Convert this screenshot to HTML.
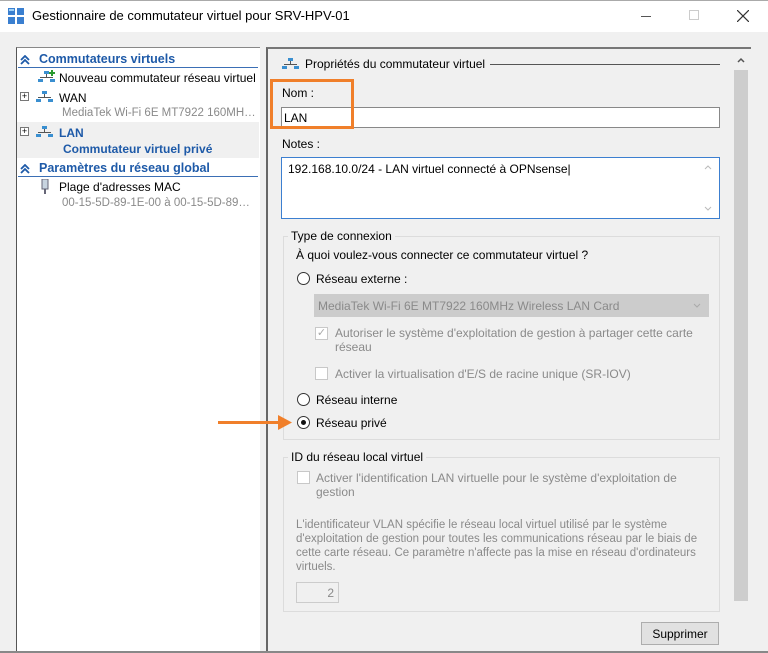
<!DOCTYPE html>
<html><head><meta charset="utf-8"><style>
*{margin:0;padding:0;box-sizing:border-box}
body{width:768px;height:653px;background:#f0f0f0;font-family:"Liberation Sans",sans-serif;font-size:12px;color:#000;position:relative;overflow:hidden}
.a{position:absolute;white-space:nowrap}
.g{color:#8a8a8a}
.hd{color:#1e5aa8;font-weight:bold}
.box{position:absolute;border:1px solid #dcdcdc}
.rad{position:absolute;width:13px;height:13px;border:1px solid #333;border-radius:50%;background:#fff}
.chk{position:absolute;width:13px;height:13px;border:1px solid #c8c8c8;background:#fff}
</style></head><body>
<div class="a" style="left:0;top:0;width:768px;height:32px;background:#fff;border-top:1px solid #aaa"></div>
<svg class="a" style="left:8px;top:8px" width="16" height="16"><rect x="0" y="0" width="7" height="7" fill="#3a7fd0"/><rect x="9" y="0" width="7" height="7" fill="#3a7fd0"/><rect x="0" y="9" width="7" height="7" fill="#3a7fd0"/><rect x="9" y="9" width="7" height="7" fill="#3a7fd0"/><rect x="1" y="1" width="5" height="2" fill="#9ed0f5"/></svg>
<div class="a" style="left:32px;top:8px;font-size:13px">Gestionnaire de commutateur virtuel pour SRV-HPV-01</div>
<div class="a" style="left:641px;top:16px;width:10px;height:1px;background:#555"></div>
<div class="a" style="left:689px;top:10px;width:10px;height:10px;border:1px solid #ccc"></div>
<svg class="a" style="left:737px;top:10px" width="12" height="12"><path d="M0 0L12 12M12 0L0 12" stroke="#333" stroke-width="1.2"/></svg>

<!-- left panel -->
<div class="a" style="left:16px;top:47px;width:244px;height:606px;background:#fff;border-left:1px solid #555;border-top:1px solid #888"></div>
<svg class="a" style="left:20px;top:55px" width="10" height="10"><path d="M1 5L5 1L9 5M1 9L5 5L9 9" stroke="#1e5aa8" stroke-width="1.8" fill="none"/></svg>
<div class="a hd" style="left:39px;top:52px;font-size:12.5px">Commutateurs virtuels</div>
<div class="a" style="left:18px;top:67px;width:240px;height:1px;background:#3b6fb5"></div>
<svg class="a" style="left:38px;top:70px" width="18" height="14"><rect x="6" y="1" width="5" height="3" fill="#3a8fd0"/><rect x="8" y="4" width="1" height="4" fill="#555"/><rect x="2" y="7" width="13" height="1" fill="#555"/><rect x="0" y="9" width="5" height="3" fill="#3a8fd0"/><rect x="12" y="9" width="5" height="3" fill="#3a8fd0"/><path d="M13 0h2v2h2v2h-2v2h-2v-2h-2v-2h2z" fill="#2a9a30"/></svg>
<div class="a" style="left:59px;top:71px">Nouveau commutateur réseau virtuel</div>
<div class="a" style="left:20px;top:92px;width:9px;height:9px;border:1px solid #777;font-size:9px;line-height:7px;text-align:center">+</div>
<svg class="a" style="left:36px;top:90px" width="18" height="13"><rect x="6" y="1" width="5" height="3" fill="#3a8fd0"/><rect x="8" y="4" width="1" height="4" fill="#555"/><rect x="2" y="7" width="13" height="1" fill="#555"/><rect x="0" y="9" width="5" height="3" fill="#3a8fd0"/><rect x="12" y="9" width="5" height="3" fill="#3a8fd0"/></svg>
<div class="a" style="left:59px;top:91px">WAN</div>
<div class="a g" style="left:62px;top:107px;font-size:11.5px">MediaTek Wi-Fi 6E MT7922 160MH…</div>
<div class="a" style="left:17px;top:122px;width:242px;height:36px;background:#f0f0f0"></div>
<div class="a" style="left:20px;top:127px;width:9px;height:9px;border:1px solid #777;font-size:9px;line-height:7px;text-align:center;background:#fff">+</div>
<svg class="a" style="left:36px;top:125px" width="18" height="13"><rect x="6" y="1" width="5" height="3" fill="#3a8fd0"/><rect x="8" y="4" width="1" height="4" fill="#555"/><rect x="2" y="7" width="13" height="1" fill="#555"/><rect x="0" y="9" width="5" height="3" fill="#3a8fd0"/><rect x="12" y="9" width="5" height="3" fill="#3a8fd0"/></svg>
<div class="a hd" style="left:59px;top:126px">LAN</div>
<div class="a hd" style="left:63px;top:142px">Commutateur virtuel privé</div>
<svg class="a" style="left:20px;top:164px" width="10" height="10"><path d="M1 5L5 1L9 5M1 9L5 5L9 9" stroke="#1e5aa8" stroke-width="1.8" fill="none"/></svg>
<div class="a hd" style="left:39px;top:161px;font-size:12.5px">Paramètres du réseau global</div>
<div class="a" style="left:18px;top:176px;width:240px;height:1px;background:#3b6fb5"></div>
<svg class="a" style="left:40px;top:179px" width="10" height="16"><rect x="2" y="0" width="6" height="10" fill="#c8d4e0" stroke="#667" stroke-width="1"/><rect x="4" y="10" width="2" height="5" fill="#667"/></svg>
<div class="a" style="left:59px;top:180px">Plage d'adresses MAC</div>
<div class="a g" style="left:62px;top:197px;font-size:11.5px">00-15-5D-89-1E-00 à 00-15-5D-89…</div>

<!-- right panel -->
<div class="a" style="left:266px;top:47px;width:485px;height:606px;border-left:2px solid #666;border-top:2px solid #777"></div>
<div class="a" style="left:733px;top:52px;width:16px;height:601px;background:#f0f0f0"></div>
<svg class="a" style="left:737px;top:57px" width="8" height="6"><path d="M1 5L4 2L7 5" stroke="#555" stroke-width="1.5" fill="none"/></svg>
<div class="a" style="left:734px;top:70px;width:14px;height:531px;background:#cdcdcd"></div>

<svg class="a" style="left:282px;top:57px" width="18" height="13"><rect x="6" y="1" width="5" height="3" fill="#3a8fd0"/><rect x="8" y="4" width="1" height="4" fill="#555"/><rect x="2" y="7" width="13" height="1" fill="#555"/><rect x="0" y="9" width="5" height="3" fill="#3a8fd0"/><rect x="12" y="9" width="5" height="3" fill="#3a8fd0"/></svg>
<div class="a" style="left:305px;top:57px">Propriétés du commutateur virtuel</div>
<div class="a" style="left:490px;top:64px;width:230px;height:1px;background:#555"></div>
<div class="a" style="left:282px;top:86px">Nom :</div>
<div class="a" style="left:281px;top:107px;width:439px;height:21px;background:#fff;border:1px solid #888;padding:3px 2px">LAN</div>
<div class="a" style="left:270px;top:79px;width:84px;height:50px;border:3px solid #f07f2a"></div>
<div class="a" style="left:282px;top:137px">Notes :</div>
<div class="a" style="left:281px;top:157px;width:439px;height:62px;background:#fff;border:1px solid #3c7fd0;padding:4px 6px">192.168.10.0/24 - LAN virtuel connecté à OPNsense|</div>
<svg class="a" style="left:704px;top:164px" width="8" height="6"><path d="M1 5L4 2L7 5" stroke="#bbb" stroke-width="1" fill="none"/></svg>
<svg class="a" style="left:704px;top:206px" width="8" height="6"><path d="M1 1L4 4L7 1" stroke="#bbb" stroke-width="1" fill="none"/></svg>

<div class="box" style="left:283px;top:236px;width:437px;height:204px"></div>
<div class="a" style="left:288px;top:229px;background:#f0f0f0;padding:0 3px">Type de connexion</div>
<div class="a" style="left:296px;top:248px">À quoi voulez-vous connecter ce commutateur virtuel ?</div>
<div class="rad" style="left:297px;top:272px"></div>
<div class="a" style="left:316px;top:272px">Réseau externe :</div>
<div class="a g" style="left:314px;top:294px;width:395px;height:23px;background:#cccccc;padding:5px 4px">MediaTek Wi-Fi 6E MT7922 160MHz Wireless LAN Card</div>
<svg class="a" style="left:693px;top:303px" width="8" height="6"><path d="M1 1L4 4L7 1" stroke="#aaa" stroke-width="1" fill="none"/></svg>
<div class="chk" style="left:315px;top:327px;color:#aaa;font-size:11px;line-height:11px;text-align:center">✓</div>
<div class="a g" style="left:335px;top:326px">Autoriser le système d'exploitation de gestion à partager cette carte</div>
<div class="a g" style="left:335px;top:340px">réseau</div>
<div class="chk" style="left:315px;top:367px"></div>
<div class="a g" style="left:335px;top:367px">Activer la virtualisation d'E/S de racine unique (SR-IOV)</div>
<div class="rad" style="left:297px;top:393px"></div>
<div class="a" style="left:316px;top:393px">Réseau interne</div>
<div class="rad" style="left:297px;top:416px"><div style="position:absolute;left:3px;top:3px;width:5px;height:5px;border-radius:50%;background:#111"></div></div>
<div class="a" style="left:316px;top:416px">Réseau privé</div>
<div class="a" style="left:218px;top:421px;width:64px;height:3px;background:#f07f2a"></div>
<svg class="a" style="left:278px;top:415px" width="16" height="15"><path d="M0 0L14 7.5L0 15z" fill="#f07f2a"/></svg>

<div class="box" style="left:283px;top:457px;width:437px;height:155px"></div>
<div class="a" style="left:288px;top:450px;background:#f0f0f0;padding:0 3px">ID du réseau local virtuel</div>
<div class="chk" style="left:297px;top:471px"></div>
<div class="a g" style="left:316px;top:471px">Activer l'identification LAN virtuelle pour le système d'exploitation de</div>
<div class="a g" style="left:316px;top:485px">gestion</div>
<div class="a g" style="left:296px;top:518px;line-height:14px;font-size:11.5px">L'identificateur VLAN spécifie le réseau local virtuel utilisé par le système<br>d'exploitation de gestion pour toutes les communications réseau par le biais de<br>cette carte réseau. Ce paramètre n'affecte pas la mise en réseau d'ordinateurs<br>virtuels.</div>
<div class="a g" style="left:296px;top:582px;width:43px;height:21px;border:1px solid #ccc;background:#f0f0f0;text-align:right;padding:3px 4px">2</div>
<div class="a" style="left:641px;top:622px;width:78px;height:23px;border:1px solid #adadad;background:#e1e1e1;text-align:center;padding-top:4px">Supprimer</div>
<div class="a" style="left:0;top:651px;width:768px;height:2px;background:#888"></div>
</body></html>
